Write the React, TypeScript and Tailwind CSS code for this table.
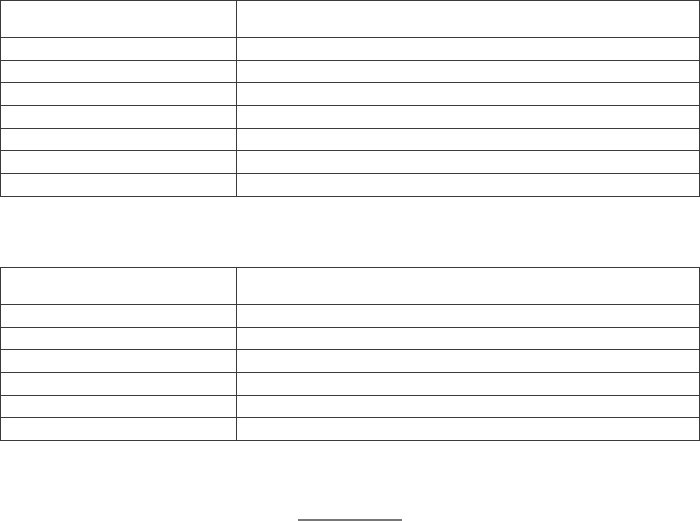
import React from "react";

function Grid({ rows }: { rows: number }) {
  return (
    <table className="w-[700px] border-collapse table-fixed">
      <colgroup>
        <col className="w-[236px]" />
        <col />
      </colgroup>
      <thead>
        <tr className="h-[37px]">
          <th className="border border-[#3a3a3a] p-0"></th>
          <th className="border border-[#3a3a3a] p-0"></th>
        </tr>
      </thead>
      <tbody>
        {Array.from({ length: rows }).map((_, i) => (
          <tr key={i} className="h-[22.7px]">
            <td className="border border-[#3a3a3a] p-0"></td>
            <td className="border border-[#3a3a3a] p-0"></td>
          </tr>
        ))}
      </tbody>
    </table>
  );
}

export default function App() {
  return (
    <div className="w-[700px] h-[521px] bg-white overflow-hidden font-['Liberation_Sans',sans-serif]">
      <Grid rows={7} />
      <div className="h-[70px]" />
      <Grid rows={6} />
      <div className="flex justify-center pt-[78px]">
        <div className="w-[104px] border-t-2 border-[#777]" />
      </div>
    </div>
  );
}
